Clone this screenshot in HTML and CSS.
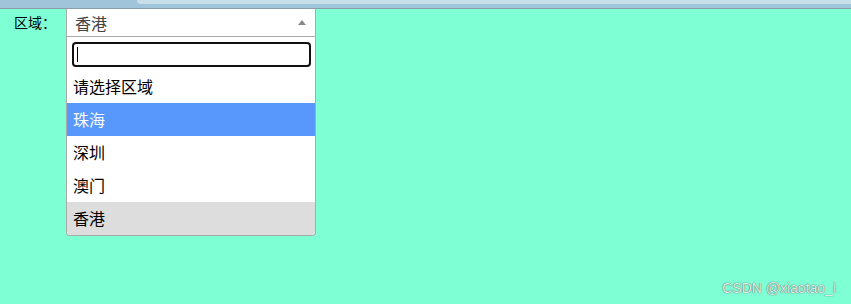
FILE: index.html
```html
<!DOCTYPE html>
<html lang="zh-CN">
<head>
  <meta charset="UTF-8">
  <meta name="viewport" content="width=device-width, initial-scale=1.0">
  <title>区域选择</title>
  <link rel="stylesheet" href="styles.css">
</head>
<body>
  <div class="topbar"><div class="tab-strip"></div></div>

  <div class="form-row">
    <label class="field-label">区域：</label>
    <div class="select-wrap">
      <div class="select-box">
        <span class="select-value">香港</span>
        <span class="select-arrow"></span>
      </div>
      <div class="dropdown">
        <div class="search">
          <div class="search-input"><span class="caret"></span></div>
        </div>
        <ul class="options">
          <li>请选择区域</li>
          <li class="highlight">珠海</li>
          <li>深圳</li>
          <li>澳门</li>
          <li class="selected">香港</li>
        </ul>
      </div>
    </div>
  </div>

  <div class="watermark">CSDN @xiaotao_i</div>
</body>
</html>
```

FILE: styles.css
```css
body {
  margin: 0;
  padding: 0;
  background-color: #7fffd4;
  font-family: "Noto Sans CJK SC", "Noto Sans", sans-serif;
  height: 304px;
  overflow: hidden;
  position: relative;
}
.topbar {
  height: 8px;
  background: #a0c4d9;
  border-bottom: 1px solid #8a9ea9;
  display: flex;
  justify-content: flex-end;
}
.tab-strip {
  width: 714px;
  height: 4px;
  background: #c6dfe9;
  border-bottom-left-radius: 4px;
}
.form-row {
  display: flex;
  align-items: flex-start;
}
.field-label {
  margin-left: 14px;
  margin-top: 3px;
  width: 52px;
  font-size: 14px;
  line-height: 20px;
  color: #000;
}
.select-wrap {
  position: relative;
  width: 250px;
}
.select-box {
  height: 27px;
  background: #fff;
  border: 1px solid #aaa;
  border-top: none;
  display: flex;
  align-items: center;
  justify-content: space-between;
  padding: 0 9px 0 8px;
  box-sizing: content-box;
  width: 231px;
}
.select-value {
  font-size: 16px;
  line-height: 26px;
  color: #444;
}
.select-arrow {
  width: 0;
  height: 0;
  border-left: 4px solid transparent;
  border-right: 4px solid transparent;
  border-bottom: 5px solid #888;
}
.dropdown {
  position: absolute;
  top: 28px;
  left: 0;
  width: 248px;
  background: #fff;
  border: 1px solid #aaa;
  border-top: none;
  border-radius: 0 0 4px 4px;
}
.search {
  padding: 5px 4px 3px 5px;
}
.search-input {
  height: 21px;
  border: 2px solid #111;
  border-radius: 4px;
  display: flex;
  align-items: center;
  padding-left: 3px;
}
.caret {
  width: 1px;
  height: 15px;
  background: #000;
}
.options {
  list-style: none;
  margin: 0;
  padding: 0;
}
.options li {
  height: 33px;
  line-height: 33px;
  padding-left: 6px;
  font-size: 16px;
  color: #000;
}
.options li.highlight {
  background: #5897fb;
  color: #fff;
}
.options li.selected {
  background: #ddd;
  border-radius: 0 0 4px 4px;
}
.watermark {
  position: absolute;
  right: 15px;
  bottom: 8px;
  font-family: "Liberation Sans", Arial, sans-serif;
  font-size: 14px;
  color: #dde9e5;
  text-shadow: 0 0 1px #5f7a72, 0 0 1px #5f7a72;
}
```
